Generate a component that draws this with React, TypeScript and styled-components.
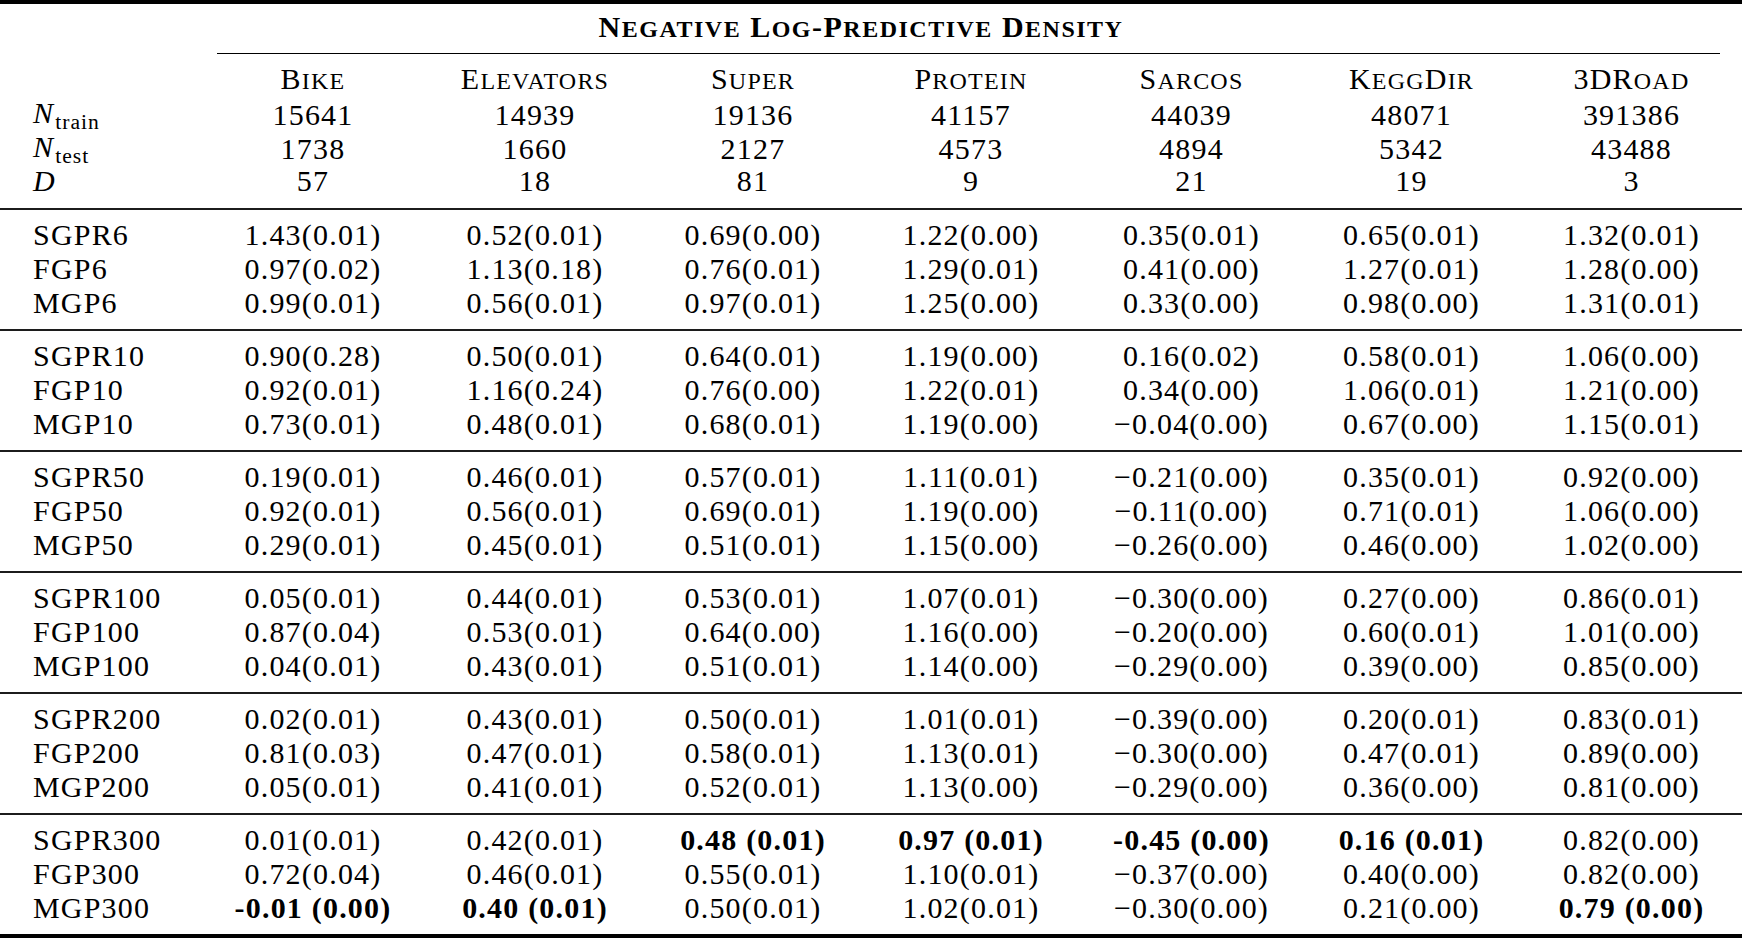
import React from 'react';
import styled, { createGlobalStyle } from 'styled-components';

const GlobalStyle = createGlobalStyle`
  html, body {
    margin: 0;
    padding: 0;
    background: #fff;
  }
  body {
    font-family: "Liberation Serif", "Times New Roman", serif;
    color: #000;
  }
`;

// column widths picked so the centres sit where the reference has them
const COLS = '201px 224px 220px 216px 220px 221px 219px 221px';

const Table = styled.div`
  width: 1742px;
  border-top: 4px solid #000;
  border-bottom: 4px solid #000;
  font-size: 30px;
  letter-spacing: 1.2px;
  line-height: 34px;
`;

const TitleRow = styled.div`
  margin-top: 6px;
  height: 34px;
  padding-right: 20px;
  text-align: center;
  font-weight: bold;
  letter-spacing: 1.5px;
`;

const CMidRule = styled.div`
  margin: 9px 22px 0 217px;
  border-top: 1px solid #000;
`;

const Block = styled.div<{ $rule?: boolean; $padBottom?: number }>`
  padding: 8px 0 ${(p) => p.$padBottom ?? 9}px;
  border-top: ${(p) => (p.$rule ? '2px solid #1c1c1c' : 'none')};
`;

const Row = styled.div`
  display: grid;
  grid-template-columns: ${COLS};
  height: 34px;
  align-items: center;
  white-space: nowrap;
`;

const Label = styled.div`
  padding-left: 33px;
  text-align: left;
`;

const Cell = styled.div<{ $bold?: boolean }>`
  text-align: center;
  font-weight: ${(p) => (p.$bold ? 'bold' : 'normal')};
`;

const Small = styled.span`
  font-size: 0.8em;
  text-transform: uppercase;
`;

const Var = styled.span`
  font-style: italic;
`;

const Sub = styled.span`
  font-size: 0.72em;
  position: relative;
  top: 0.28em;
  margin-left: 1px;
  letter-spacing: 1px;
`;

// renders text in small caps: capitals stay full size, lower case shrinks
const SmallCaps = ({ text }: { text: string }) => {
  const runs = text.match(/[a-z]+|[^a-z]+/g) || [];
  return (
    <>
      {runs.map((r, i) =>
        /[a-z]/.test(r) ? <Small key={i}>{r}</Small> : <span key={i}>{r}</span>
      )}
    </>
  );
};

const datasets = ['Bike', 'Elevators', 'Super', 'Protein', 'Sarcos', 'KeggDir', '3DRoad'];
const nTrain = [15641, 14939, 19136, 41157, 44039, 48071, 391386];
const nTest = [1738, 1660, 2127, 4573, 4894, 5342, 43488];
const dims = [57, 18, 81, 9, 21, 19, 3];

// '*' marks the best result (bold)
const sections: [string, string[]][][] = [
  [
    ['SGPR6', ['1.43(0.01)', '0.52(0.01)', '0.69(0.00)', '1.22(0.00)', '0.35(0.01)', '0.65(0.01)', '1.32(0.01)']],
    ['FGP6', ['0.97(0.02)', '1.13(0.18)', '0.76(0.01)', '1.29(0.01)', '0.41(0.00)', '1.27(0.01)', '1.28(0.00)']],
    ['MGP6', ['0.99(0.01)', '0.56(0.01)', '0.97(0.01)', '1.25(0.00)', '0.33(0.00)', '0.98(0.00)', '1.31(0.01)']],
  ],
  [
    ['SGPR10', ['0.90(0.28)', '0.50(0.01)', '0.64(0.01)', '1.19(0.00)', '0.16(0.02)', '0.58(0.01)', '1.06(0.00)']],
    ['FGP10', ['0.92(0.01)', '1.16(0.24)', '0.76(0.00)', '1.22(0.01)', '0.34(0.00)', '1.06(0.01)', '1.21(0.00)']],
    ['MGP10', ['0.73(0.01)', '0.48(0.01)', '0.68(0.01)', '1.19(0.00)', '−0.04(0.00)', '0.67(0.00)', '1.15(0.01)']],
  ],
  [
    ['SGPR50', ['0.19(0.01)', '0.46(0.01)', '0.57(0.01)', '1.11(0.01)', '−0.21(0.00)', '0.35(0.01)', '0.92(0.00)']],
    ['FGP50', ['0.92(0.01)', '0.56(0.01)', '0.69(0.01)', '1.19(0.00)', '−0.11(0.00)', '0.71(0.01)', '1.06(0.00)']],
    ['MGP50', ['0.29(0.01)', '0.45(0.01)', '0.51(0.01)', '1.15(0.00)', '−0.26(0.00)', '0.46(0.00)', '1.02(0.00)']],
  ],
  [
    ['SGPR100', ['0.05(0.01)', '0.44(0.01)', '0.53(0.01)', '1.07(0.01)', '−0.30(0.00)', '0.27(0.00)', '0.86(0.01)']],
    ['FGP100', ['0.87(0.04)', '0.53(0.01)', '0.64(0.00)', '1.16(0.00)', '−0.20(0.00)', '0.60(0.01)', '1.01(0.00)']],
    ['MGP100', ['0.04(0.01)', '0.43(0.01)', '0.51(0.01)', '1.14(0.00)', '−0.29(0.00)', '0.39(0.00)', '0.85(0.00)']],
  ],
  [
    ['SGPR200', ['0.02(0.01)', '0.43(0.01)', '0.50(0.01)', '1.01(0.01)', '−0.39(0.00)', '0.20(0.01)', '0.83(0.01)']],
    ['FGP200', ['0.81(0.03)', '0.47(0.01)', '0.58(0.01)', '1.13(0.01)', '−0.30(0.00)', '0.47(0.01)', '0.89(0.00)']],
    ['MGP200', ['0.05(0.01)', '0.41(0.01)', '0.52(0.01)', '1.13(0.00)', '−0.29(0.00)', '0.36(0.00)', '0.81(0.00)']],
  ],
  [
    ['SGPR300', ['0.01(0.01)', '0.42(0.01)', '*0.48 (0.01)', '*0.97 (0.01)', '*-0.45 (0.00)', '*0.16 (0.01)', '0.82(0.00)']],
    ['FGP300', ['0.72(0.04)', '0.46(0.01)', '0.55(0.01)', '1.10(0.01)', '−0.37(0.00)', '0.40(0.00)', '0.82(0.00)']],
    ['MGP300', ['*-0.01 (0.00)', '*0.40 (0.01)', '0.50(0.01)', '1.02(0.01)', '−0.30(0.00)', '0.21(0.00)', '*0.79 (0.00)']],
  ],
];

const App = () => (
  <>
    <GlobalStyle />
    <Table>
      <TitleRow>
        <SmallCaps text="Negative Log-Predictive Density" />
      </TitleRow>
      <CMidRule />
      <Block $padBottom={10}>
        <Row>
          <Label />
          {datasets.map((d) => (
            <Cell key={d}>
              <SmallCaps text={d} />
            </Cell>
          ))}
        </Row>
        <Row>
          <Label>
            <Var>N</Var>
            <Sub>train</Sub>
          </Label>
          {nTrain.map((n, i) => (
            <Cell key={i}>{n}</Cell>
          ))}
        </Row>
        <Row>
          <Label>
            <Var>N</Var>
            <Sub>test</Sub>
          </Label>
          {nTest.map((n, i) => (
            <Cell key={i}>{n}</Cell>
          ))}
        </Row>
        <Row>
          <Label>
            <Var>D</Var>
          </Label>
          {dims.map((n, i) => (
            <Cell key={i}>{n}</Cell>
          ))}
        </Row>
      </Block>
      {sections.map((rows, s) => (
        <Block key={s} $rule>
          {rows.map(([name, vals]) => (
            <Row key={name}>
              <Label>{name}</Label>
              {vals.map((v, i) => {
                const bold = v.startsWith('*');
                return (
                  <Cell key={i} $bold={bold}>
                    {bold ? v.slice(1) : v}
                  </Cell>
                );
              })}
            </Row>
          ))}
        </Block>
      ))}
    </Table>
  </>
);

export default App;
